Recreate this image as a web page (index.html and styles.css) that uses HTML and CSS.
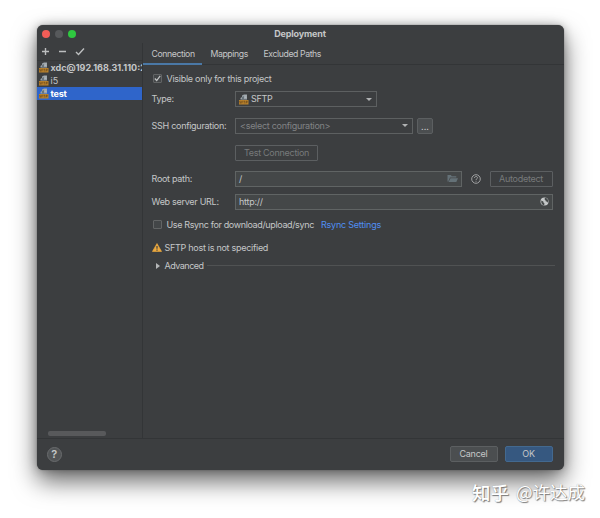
FILE: index.html
```
<!DOCTYPE html>
<html lang="en">
<head>
<meta charset="utf-8">
<title>Deployment</title>
<link rel="stylesheet" href="styles.css">
</head>
<body>
<svg class="defs" width="0" height="0">
  <symbol id="server" viewBox="0 0 20 22">
    <path d="M3 11V8l3-2V3l4-2h6v10z" fill="#9ba3a9"/>
    <path d="M6 6l4-2v7H6z" fill="#69747c"/>
    <path d="M11 4h4M11 7h4" stroke="#c3c9cd" stroke-width="1"/>
    <path d="M0 12h19v9H0z" fill="#b9822c"/>
    <path d="M3 14.500h-1.500v2H3v2H1.500M5.500 19v-4.500h2M5.500 16.500h1.500M9 14.500h3M10.500 14.500V19M14 19v-4.500h2.500v2.200H14" fill="none" stroke="#583d19" stroke-width="1"/>
  </symbol>
</svg>
<main class="window">
  <header class="titlebar">
    <div class="lights"><i class="red"></i><i class="gray"></i><i class="green"></i></div>
    <h1>Deployment</h1>
  </header>
  <div class="body">
    <aside class="sidebar">
      <div class="tools">
        <svg width="9" height="9" viewBox="0 0 9 9"><path d="M4.500 1v7M1 4.500h7"/></svg>
        <svg width="9" height="9" viewBox="0 0 9 9"><path d="M1 4.500h7"/></svg>
        <svg width="10" height="9" viewBox="0 0 10 9"><path d="M1 5l2.500 2.500L9 1.500"/></svg>
      </div>
      <ul class="servers">
        <li class="bold"><svg><use href="#server"/></svg><span>xdc@192.168.31.110:22</span></li>
        <li><svg><use href="#server"/></svg><span>i5</span></li>
        <li class="bold selected"><svg><use href="#server"/></svg><span>test</span></li>
      </ul>
      <div class="scrollbar"></div>
    </aside>
    <section class="content">
      <nav class="tabs"><span class="tab active">Connection</span><span class="tab">Mappings</span><span class="tab">Excluded Paths</span></nav>
      <div class="form">
        <div class="row visible"><span class="check"><svg width="9" height="9" viewBox="0 0 9 9"><path d="M1.800 4.500l1.900 2L7.200 1.800" fill="none" stroke="#c3c5c6" stroke-width="1.200"/></svg></span><span>Visible only for this project</span></div>
        <div class="row type"><label>Type:</label><div class="select small"><svg class="server"><use href="#server"/></svg><span>SFTP</span><i class="arrow"></i></div></div>
        <div class="row ssh"><label>SSH configuration:</label><div class="select"><span class="placeholder">&lt;select configuration&gt;</span><i class="arrow"></i></div><span class="button more">...</span></div>
        <div class="row test"><label></label><span class="button disabled test-button">Test Connection</span></div>
        <div class="row root"><label>Root path:</label><div class="field"><span>/</span><svg width="11" height="9" viewBox="0 0 11 9"><path d="M.5 7.500V1h3.300l1 1.200h4.500v1.300H3L1.200 7.500zM3.500 4.200H11L9.300 8H1.500z" fill="#647177"/></svg></div>
          <svg class="hint" width="10" height="10" viewBox="0 0 10 10"><circle cx="5" cy="5" r="4.300"/><path d="M3.500 4c0-2 3-2 3-.2C6.500 4.800 5 4.800 5 6M5 6.800v.9"/></svg><span class="button disabled auto">Autodetect</span></div>
        <div class="row web"><label>Web server URL:</label><div class="field"><span>http://</span><svg width="9" height="9" viewBox="0 0 9 9"><circle cx="4.500" cy="4.500" r="4" fill="#c4c7c8"/><path d="M1.300 3.500l2 1 .3 1.200.9.800-.4 1.700C2 8 .8 6 1.300 3.500zM5 .8l-.5 1.400 1 1 .2 1.100 1.500.4.600 1.100C9 3.500 7.500 1 5 .8z" fill="#454949"/></svg></div></div>
        <div class="row rsync"><span class="check"></span><span class="rsync-label">Use Rsync for download/upload/sync</span><a>Rsync Settings</a></div>
        <div class="row warn"><svg width="10" height="9" viewBox="0 0 10 9"><path d="M5 .5L9.600 8.500H.4z" fill="#eda93e" stroke="#eda93e" stroke-width=".6" stroke-linejoin="round"/><path d="M5 3v2.800M5 6.600v1.200" stroke="#3c3f41" stroke-width="1.200"/></svg><span>SFTP host is not specified</span></div>
        <div class="row advanced"><i></i><span>Advanced</span><hr></div>
      </div>
    </section>
  </div>
  <footer><span class="help">?</span><span class="button cancel">Cancel</span><span class="button ok">OK</span></footer>
</main>
<div class="watermark"><b>知乎</b><span>@许达成</span></div>
</body>
</html>
```
FILE: styles.css
```
* { box-sizing: border-box; }
body {
  margin: 0; width: 600px; height: 518px; padding: 24.500px 0 0 36.500px; overflow: hidden;
  background: #fff; color: #c5c7c8;
  font: 9px/12px Inter, "Liberation Sans", sans-serif;
  white-space: nowrap;
}
.defs { position: absolute; }
svg { flex: none; }
.window {
  display: flex; flex-direction: column; width: 527px; height: 445px;
  border-radius: 6px; overflow: hidden; background: #3c3e40;
  box-shadow: 0 0 1px #444, 0 11px 25px rgba(0,0,0,.6), 0 0 10px rgba(0,0,0,.25);
}
.titlebar { display: grid; grid-template-columns: 100%; height: 18.500px; flex: none; align-items: center; }
.titlebar > * { grid-area: 1 / 1; }
h1 { margin: 0; font-size: 9px; line-height: 18px; text-align: center; letter-spacing: -.15px; }
.lights { display: flex; gap: 5px; padding-left: 5.500px; }
.lights i { width: 8px; height: 8px; border-radius: 50%; }
.red { background: #f25d57; }
.gray { background: #57595b; }
.green { background: #2fc840; }
.body { display: flex; flex: 1; min-height: 0; }
.sidebar { display: flex; flex-direction: column; width: 106px; flex: none; border-right: 1px solid #333537; }
.tools { display: flex; align-items: center; gap: 8px; height: 18px; padding-left: 4px; flex: none; border-bottom: 1px solid #363839; }
.tools svg { fill: none; stroke: #bcbebf; stroke-width: 1.400; }
.servers { list-style: none; margin: 0; padding: 0; flex: 1; }
.servers li { display: flex; align-items: center; height: 13.100px; padding-left: 2px; gap: 2px; overflow: hidden; }
.servers svg, .server { width: 10px; height: 11px; }
.bold { font-weight: 700; }
.selected { background: #2f65ca; color: #fff; letter-spacing: -.2px; }
.scrollbar { width: 58px; height: 5px; margin: 0 0 2px 11px; border-radius: 2px; background: #58595b; }
.content { display: flex; flex-direction: column; flex: 1; min-width: 0; letter-spacing: -.28px; }
.tabs { display: flex; height: 22px; flex: none; border-bottom: 1px solid #333537; letter-spacing: -.4px; font-size: 8.700px; }
.tab { width: 53px; height: 22px; padding-left: 9px; line-height: 22px; }
.tab.active { width: 59px; border-bottom: 2px solid #4a78a6; }
.form { padding: 5.600px 11px 0 9px; }
.row { display: flex; align-items: center; height: 16px; }
label { width: 83.500px; flex: none; }
.type { margin-top: 4.500px; }
.ssh { margin-top: 10.500px; }
.test { margin-top: 11px; }
.root { margin-top: 10px; }
.web { margin-top: 7px; }
.rsync { margin-top: 7px; }
.warn { margin-top: 7px; gap: 3px; }
.advanced { margin-top: 2px; }
.check { width: 9px; height: 9px; margin: 0 5px 0 1px; border: 1px solid #626465; border-radius: 1px; background: #434648; }
.check svg { display: block; margin: -1px; }
.select { display: flex; align-items: center; width: 178px; height: 16px; padding: 0 4px; border: 1px solid #5d6061; }
.select.small { width: 142px; gap: 2px; padding-left: 3px; }
.placeholder { color: #818385; }
.arrow { margin-left: auto; border: 3px solid transparent; border-top: 3.500px solid #b0b2b3; border-bottom: 0; }
.button { height: 16px; border: 1px solid #5c5f61; border-radius: 2px; background: #4b4e50; line-height: 14px; text-align: center; }
.more { width: 16px; margin-left: 4px; line-height: 15px; letter-spacing: 0; }
.disabled { background: transparent; color: #777a7b; border-radius: 1px; }
.test-button { width: 83px; }
.field { display: flex; align-items: center; justify-content: space-between; flex: 1; height: 16px; padding: 0 3px; border: 1px solid #606464; background: #444748; }
.hint { margin: 0 9px; fill: none; stroke: #aaacad; stroke-width: .9; }
.auto { width: 63px; }
.rsync-label { width: 147.500px; letter-spacing: -.36px; }
.rsync a { margin-left: 7px; color: #508ff2; letter-spacing: -.22px; }
.advanced i { margin: 0 5px 0 4px; border: 3px solid transparent; border-left: 4px solid #b5b7b8; border-right: 0; }
.advanced span { letter-spacing: -.5px; }
.advanced hr { flex: 1; height: 1px; margin: 0 -2px 0 3px; border: 0; background: #505253; }
footer { display: flex; align-items: center; height: 31.500px; flex: none; padding: 0 11px 0 10px; border-top: 1px solid #333537; letter-spacing: -.25px; }
.help { width: 15px; height: 15px; margin-right: auto; border: 1px solid #696b6d; border-radius: 50%; background: #515456; line-height: 13px; text-align: center; font-size: 11px; font-weight: 600; }
.cancel { width: 48px; margin-right: 7px; }
.ok { width: 48px; background: #365880; border-color: #43698f; }
.watermark {
  position: absolute; left: 472px; top: 481px; display: flex; gap: 7px;
  color: #fff; font: 18.500px/22px "Noto Sans CJK SC", sans-serif;
  text-shadow: 1px 1px 1px #777, 0 0 1px #999;
}
.watermark b { font-weight: 500; }
.watermark span { font-size: 17.500px; }
```
